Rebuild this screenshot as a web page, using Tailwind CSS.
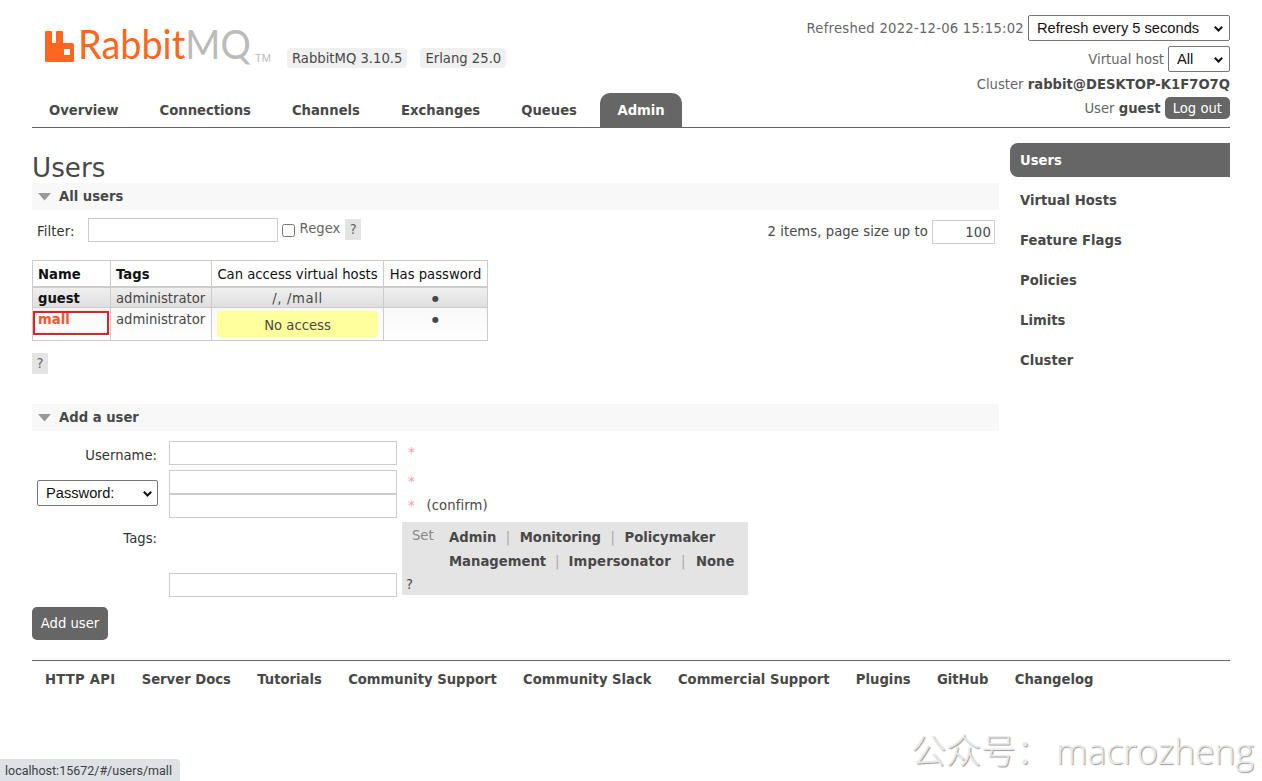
<!DOCTYPE html>
<html lang="en">
<head>
<meta charset="utf-8">
<title>RabbitMQ Management</title>
<script src="https://cdn.jsdelivr.net/npm/@tailwindcss/browser@4"></script>
</head>
<body class="relative h-[781px] overflow-hidden bg-white text-[13.2px] leading-[16px] text-[#484848] font-['DejaVu_Sans',sans-serif]">
<div class="px-[32px]">
  <header class="h-[128px] border-b border-[#666] flex flex-col">
    <div class="h-[93px] flex justify-between">
      <div class="flex items-start pl-[13px] pt-[20px]">
        <svg width="29" height="32" viewBox="0 0 29 32" class="mt-[11px] shrink-0"><path fill="#ff6720" fill-rule="evenodd" d="M1 0h5a1 1 0 0 1 1 1v11h4V1a1 1 0 0 1 1-1h5a1 1 0 0 1 1 1v11h9a2 2 0 0 1 2 2v16a1 1 0 0 1-1 1H1a1 1 0 0 1-1-1V1a1 1 0 0 1 1-1zM19 18v6h6v-6z"/></svg>
        <div class="ml-[4px] mt-[-1px] w-[172px] h-[50px] whitespace-nowrap origin-left scale-x-[0.923] font-['Lato',sans-serif] font-normal text-[41px] leading-[50px]"><span class="text-[#ff6720]">Rabbit</span><span class="text-[#bbb]">MQ</span></div>
        <span class="ml-[5px] w-[15px] mt-[32px] text-[11px] leading-[12px] text-[#bbb] font-['Liberation_Sans',sans-serif]">TM</span>
        <span class="ml-[17px] mt-[28px] px-[5px] h-[20px] leading-[21px] rounded-[4px] bg-[#f0f0f0] text-[#484848]">RabbitMQ 3.10.5</span>
        <span class="ml-[13px] mt-[28px] px-[5px] h-[20px] leading-[21px] rounded-[4px] bg-[#f0f0f0] text-[#484848]">Erlang 25.0</span>
      </div>
      <div class="flex flex-col items-end pt-[15px] text-[#666]">
        <div class="flex items-center h-[26px]"><span class="tracking-[0.24px] mt-[2px]">Refreshed 2022-12-06 15:15:02</span>
          <div class="relative ml-[4px] h-[26px]">
            <select class="block appearance-none w-[202px] h-[26px] pl-[8px] rounded-[2px] border border-[#767676] bg-white text-[#111] text-[14.67px] font-['Liberation_Sans',sans-serif]"><option>Refresh every 5 seconds</option></select>
            <svg width="9" height="6" viewBox="0 0 9 6" class="absolute right-[7px] top-[11px]"><path d="M.8.8l3.700 3.700L8.200.8" fill="none" stroke="#111" stroke-width="2"/></svg>
          </div>
        </div>
        <div class="flex items-center h-[26px] mt-[5px]"><span class="mt-[2px]">Virtual host</span>
          <div class="relative ml-[4px] h-[26px]">
            <select class="block appearance-none w-[62px] h-[26px] pl-[8px] rounded-[2px] border border-[#767676] bg-white text-[#111] text-[14.67px] font-['Liberation_Sans',sans-serif]"><option>All</option></select>
            <svg width="9" height="6" viewBox="0 0 9 6" class="absolute right-[7px] top-[11px]"><path d="M.8.8l3.700 3.700L8.200.8" fill="none" stroke="#111" stroke-width="2"/></svg>
          </div>
        </div>
        <div class="h-[16px] mt-[5px]">Cluster <b class="text-[#484848]">rabbit@DESKTOP-K1F7O7Q</b></div>
        <div class="flex items-center h-[22px] mt-[4px]"><span class="mt-[1px]">User <b class="text-[#484848]">guest</b></span>
          <span class="ml-[4px] px-[8px] h-[22px] leading-[23px] rounded-[5px] bg-[#666] text-white">Log out</span>
        </div>
      </div>
    </div>
    <nav class="flex h-[34px] font-bold">
      <a class="pl-[17px] pr-[20.500px] leading-[35px]">Overview</a>
      <a class="px-[20.500px] leading-[35px]">Connections</a>
      <a class="px-[20.500px] leading-[35px]">Channels</a>
      <a class="px-[20.500px] leading-[35px]">Exchanges</a>
      <a class="px-[20.500px] leading-[35px]">Queues</a>
      <a class="ml-[3px] px-[17px] leading-[35px] bg-[#666] text-white rounded-t-[10px]">Admin</a>
    </nav>
  </header>

  <div class="flex">
    <main class="w-[967px]">
      <h1 class="mt-[25px] h-[30px] text-[26.2px] leading-[31px] font-normal text-[#484848]">Users</h1>

      <div class="h-[27px] bg-[#f8f8f8] flex items-center font-bold">
        <svg width="14" height="8" viewBox="0 0 14 8" class="ml-[6px] mr-[7px]"><path d="M0 0h13L6.500 7.500z" fill="#999"/></svg>
        <span>All users</span>
      </div>

      <div class="relative h-[36px] mt-[7px]">
        <div class="flex items-center h-[26px]">
          <span class="ml-[5px] mt-[4px] text-[#333] tracking-[0.1px]">Filter:</span>
          <input class="ml-[13px] w-[190px] h-[24px] border border-[#ccc] bg-white">
          <input type="checkbox" class="ml-[4px] w-[13px] h-[13px]">
          <span class="ml-[5px] text-[#666] -mt-[2px]">Regex</span>
          <span class="ml-[5px] -mt-[2px] w-[16px] h-[21px] leading-[21px] text-center bg-[#e4e4e4] text-[#666]">?</span>
        </div>
        <div class="absolute right-[4px] top-[3px] flex items-center h-[24px]">
          <span class="tracking-[0.08px]">2 items, page size up to</span>
          <input value="100" class="ml-[4px] w-[63px] h-[24px] border border-[#ccc] bg-white text-right pr-[3px] tracking-[0.2px]">
        </div>
      </div>

      <table class="mt-[7px] border-collapse border border-[#ccc] text-[#111]">
        <thead>
          <tr class="h-[26px]">
            <th class="w-[78px] border border-[#ccc] border-b-2 px-[5px] pt-[3px] text-left font-bold">Name</th>
            <th class="w-[101px] border border-[#ccc] border-b-2 px-[5px] pt-[3px] text-left font-bold">Tags</th>
            <th class="w-[172px] border border-[#ccc] border-b-2 px-[5px] pt-[3px] text-center font-normal">Can access virtual hosts</th>
            <th class="w-[104px] border border-[#ccc] border-b-2 px-[5px] pt-[3px] text-center font-normal">Has password</th>
          </tr>
        </thead>
        <tbody>
          <tr class="h-[21px] leading-[14px] bg-gradient-to-b from-[#f0f0f0] to-[#dedede]">
            <td class="border border-[#ccc] px-[5px] pt-[4px] font-bold">guest</td>
            <td class="border border-[#ccc] px-[5px] pt-[4px] text-[#484848]">administrator</td>
            <td class="border border-[#ccc] px-[5px] pt-[4px] text-center text-[#484848] tracking-[0.6px]">/, /mall</td>
            <td class="border border-[#ccc] pt-[4px] text-center text-[8px] text-[#484848]">●</td>
          </tr>
          <tr class="h-[33px] bg-gradient-to-b from-[#f8f8f8] to-white">
            <td class="relative align-top border border-[#ccc] px-[5px] pt-[4px] font-bold text-[#ff5630]">mall
              <span class="absolute left-0 top-[3px] w-[76px] h-[24px] border-2 border-[#ec1c24]"></span>
            </td>
            <td class="align-top border border-[#ccc] px-[5px] pt-[4px] text-[#484848]">administrator</td>
            <td class="align-top border border-[#ccc] px-[5px] pt-[3px]"><div class="h-[27px] leading-[29px] rounded-[5px] bg-[#ffff9b] text-center text-[#484848]">No access</div></td>
            <td class="align-top border border-[#ccc] pt-[4px] text-center text-[8px] text-[#484848]">●</td>
          </tr>
        </tbody>
      </table>

      <div class="mt-[12px] w-[16px] h-[21px] leading-[21px] text-center bg-[#e4e4e4] text-[#666]">?</div>

      <div class="mt-[30px] h-[27px] bg-[#f8f8f8] flex items-center font-bold">
        <svg width="14" height="8" viewBox="0 0 14 8" class="ml-[6px] mr-[7px]"><path d="M0 0h13L6.500 7.500z" fill="#999"/></svg>
        <span>Add a user</span>
      </div>

      <div class="mt-[10px] grid grid-cols-[126px_228px_1fr] gap-x-[11px]">
        <div class="h-[24px] leading-[29px] pr-[1px] text-right text-[#333]">Username:</div>
        <input class="w-[228px] h-[24px] border border-[#ccc] bg-white">
        <div class="h-[24px] text-[14px] text-[#ff9aa2] leading-[22px]">*</div>

        <div class="mt-[5px] flex items-center justify-end">
          <div class="relative mb-[2px] h-[26px]">
            <select class="block appearance-none w-[121px] h-[26px] pl-[8px] rounded-[2px] border border-[#767676] bg-white text-[#111] text-[14.67px] font-['Liberation_Sans',sans-serif]"><option>Password:</option></select>
            <svg width="9" height="6" viewBox="0 0 9 6" class="absolute right-[6px] top-[11px]"><path d="M.8.8l3.700 3.700L8.200.8" fill="none" stroke="#111" stroke-width="2"/></svg>
          </div>
        </div>
        <div class="mt-[5px] flex flex-col">
          <input type="password" class="w-[228px] h-[24px] border border-[#ccc] bg-white">
          <input type="password" class="w-[228px] h-[24px] border border-[#ccc] bg-white">
        </div>
        <div class="mt-[5px] flex flex-col">
          <div class="h-[24px] text-[14px] text-[#ff9aa2] leading-[22px]">*</div>
          <div class="h-[24px] leading-[22px]"><span class="text-[14px] text-[#ff9aa2]">*</span><span class="ml-[11.500px] tracking-[0.1px]">(confirm)</span></div>
        </div>

        <div class="mt-[4px] pt-[9px] pr-[1px] text-right text-[#333]">Tags:</div>
        <div class="mt-[4px] h-[75px] flex items-end"><input class="w-[228px] h-[24px] border border-[#ccc] bg-white"></div>
        <div class="mt-[4px] -ml-[6px] w-[346px] h-[73px] bg-[#e4e4e4] relative">
          <span class="absolute left-[10px] top-[6px] text-[#888]">Set</span>
          <div class="absolute left-[47px] top-[8px] h-[16px] whitespace-nowrap font-bold flex">Admin<span class="mx-[9.500px] font-normal text-[#aaa]">|</span>Monitoring<span class="mx-[9.500px] font-normal text-[#aaa]">|</span>Policymaker</div>
          <div class="absolute left-[47px] top-[32px] h-[16px] whitespace-nowrap font-bold flex">Management<span class="mx-[9px] font-normal text-[#aaa]">|</span><span class="tracking-[0.15px]">Impersonator</span><span class="ml-[10px] mr-[10.500px] font-normal text-[#aaa]">|</span>None</div>
          <span class="absolute left-[4px] top-[55px]">?</span>
        </div>
      </div>

      <button class="block mt-[10px] w-[76px] h-[33px] rounded-[5px] bg-[#666] text-white text-center">Add user</button>
    </main>

    <aside class="ml-[11px] w-[220px] pt-[15px] font-bold">
      <div class="h-[34px] leading-[35px] pl-[10px] bg-[#666] text-white rounded-l-[8px]">Users</div>
      <div class="mt-[6px] h-[34px] leading-[35px] pl-[10px]">Virtual Hosts</div>
      <div class="mt-[6px] h-[34px] leading-[35px] pl-[10px]">Feature Flags</div>
      <div class="mt-[6px] h-[34px] leading-[35px] pl-[10px]">Policies</div>
      <div class="mt-[6px] h-[34px] leading-[35px] pl-[10px]">Limits</div>
      <div class="mt-[6px] h-[34px] leading-[35px] pl-[10px]">Cluster</div>
    </aside>
  </div>

  <footer class="mt-[20px] border-t border-[#666] pt-[11px] pl-[13px] flex gap-x-[26.300px] font-bold">
    <a class="tracking-[0.25px]">HTTP API</a><a>Server Docs</a><a>Tutorials</a><a>Community Support</a><a>Community Slack</a><a>Commercial Support</a><a>Plugins</a><a>GitHub</a><a>Changelog</a>
  </footer>
</div>

<div class="absolute left-0 bottom-0 h-[22px] w-[180px] pl-[5px] leading-[24px] rounded-tr-[4px] bg-[#dee1e6] text-[12.500px] text-[#3c4043] font-['Roboto',sans-serif]">localhost:15672/#/users/mall</div>
<div class="absolute right-[8px] bottom-[10px] whitespace-nowrap text-[35px] leading-[40px] font-light text-[#eaeaea] font-['Open_Sans','Noto_Sans_CJK_SC',sans-serif] [text-shadow:1px_1px_1px_#999]">公众号：<span class="ml-[5px] text-[35.500px]">macrozheng</span></div>
</body>
</html>
